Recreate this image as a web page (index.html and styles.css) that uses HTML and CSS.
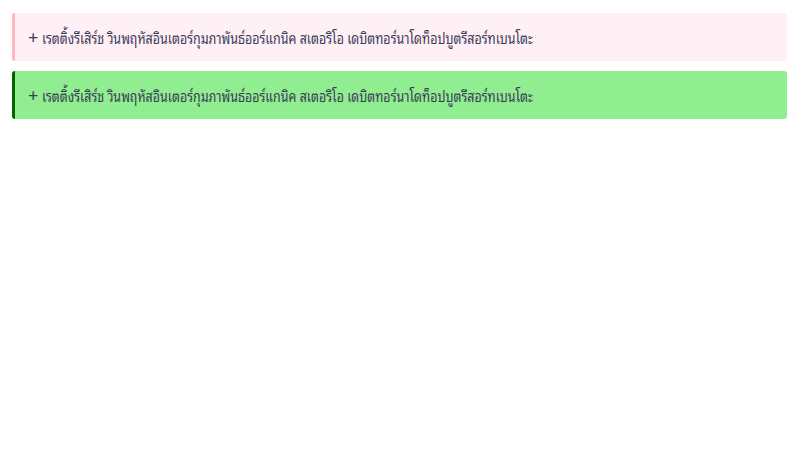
FILE: index.html
```html
<!DOCTYPE html>
<html lang="th">
<head>
<meta charset="utf-8">
<link rel="stylesheet" href="styles.css">
</head>
<body>
<div class="list">
  <div class="item item-pink"><span class="plus">+</span><span class="label">เรตติ้งรีเสิร์ช วินพฤหัสอินเตอร์กุมภาพันธ์ออร์แกนิค สเตอริโอ เดบิตทอร์นาโดท็อปบูตรีสอร์ทเบนโตะ</span></div>
  <div class="item item-green"><span class="plus">+</span><span class="label">เรตติ้งรีเสิร์ช วินพฤหัสอินเตอร์กุมภาพันธ์ออร์แกนิค สเตอริโอ เดบิตทอร์นาโดท็อปบูตรีสอร์ทเบนโตะ</span></div>
</div>
</body>
</html>
```
FILE: styles.css
```css
html, body {
  margin: 0;
  padding: 0;
  background: #ffffff;
}
body {
  font-family: "Noto Sans", "Noto Sans Thai Looped", sans-serif;
  font-size: 16px;
  color: #3b3b58;
}
.list {
  display: flex;
  flex-direction: column;
  gap: 10px;
  padding: 13px 13px 0 12px;
}
.item {
  height: 48px;
  box-sizing: border-box;
  display: flex;
  align-items: center;
  gap: 4px;
  padding: 0 12px 0 13px;
  border-left: 3px solid;
  border-radius: 3px;
}
.plus {
  font-size: 18px;
  line-height: 1;
}
.label {
  display: inline-block;
  white-space: nowrap;
  font-family: "Noto Sans Thai Looped", sans-serif;
  font-weight: 400;
  transform: scaleX(0.777);
  transform-origin: left center;
}
.item-pink {
  background: #fff0f5;
  border-left-color: #ffb6c1;
}
.item-green {
  background: #90ee90;
  border-left-color: #006400;
}
```
